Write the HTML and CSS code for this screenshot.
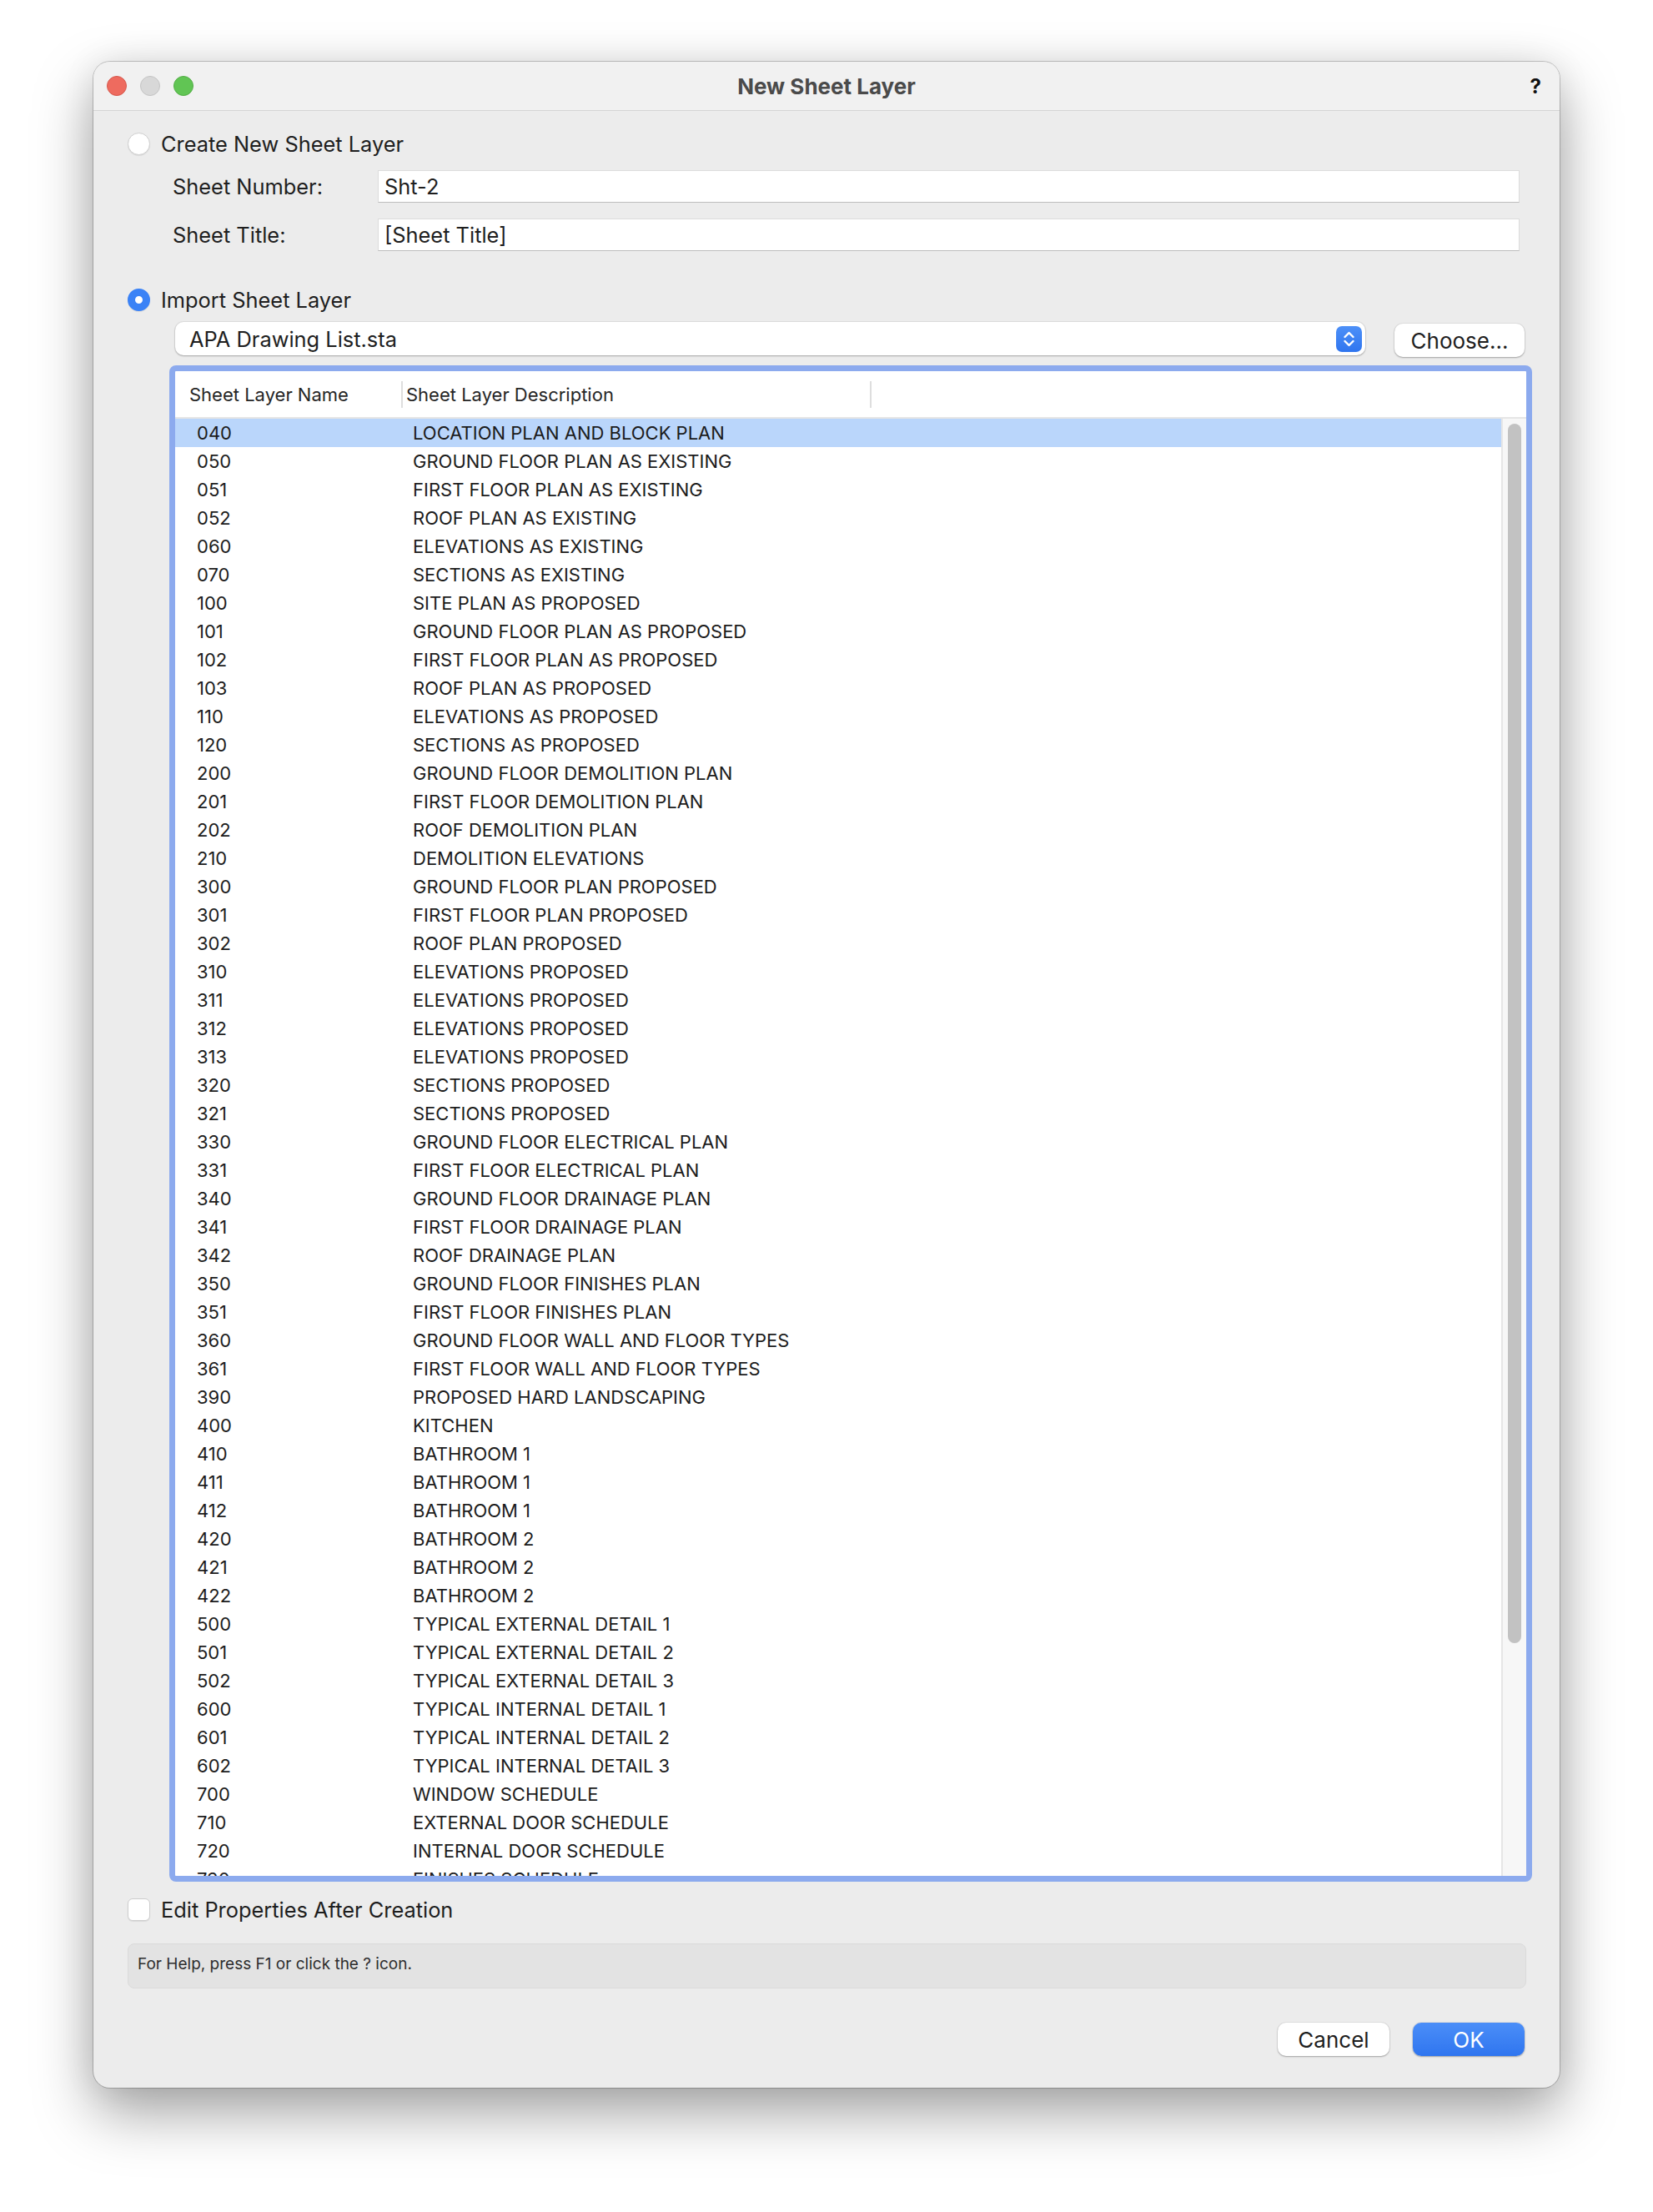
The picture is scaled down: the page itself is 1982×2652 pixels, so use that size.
FILE: index.html
```html
<!DOCTYPE html>
<html lang="en">
<head>
    <meta charset="UTF-8">
    <title>New Sheet Layer</title>
    <link rel="stylesheet" href="styles.css">
</head>
<body>
    <div class="window">
        <div class="titlebar">
            <div class="lights">
                <span class="light red"></span>
                <span class="light gray"></span>
                <span class="light green"></span>
            </div>
            <div class="title">New Sheet Layer</div>
            <div class="help-btn">?</div>
        </div>

        <div class="content">
            <div class="option first">
                <span class="radio"></span>
                <span>Create New Sheet Layer</span>
            </div>

            <div class="form">
                <label>Sheet Number:</label>
                <div class="field">Sht-2</div>
                <label>Sheet Title:</label>
                <div class="field">[Sheet Title]</div>
            </div>

            <div class="option second">
                <span class="radio checked"></span>
                <span>Import Sheet Layer</span>
            </div>

            <div class="file-row">
                <div class="popup">
                    <span>APA Drawing List.sta</span>
                    <svg class="stepper" width="31" height="31" viewBox="0 0 31 31">
                        <defs>
                            <linearGradient id="stepgrad" x1="0" y1="0" x2="0" y2="1">
                                <stop offset="0" stop-color="#4d90f8"/>
                                <stop offset="1" stop-color="#2f75ef"/>
                            </linearGradient>
                        </defs>
                        <rect width="31" height="31" rx="7" fill="url(#stepgrad)"/>
                        <path d="M10.5 13 L15.5 8 L20.5 13" fill="none" stroke="#fff" stroke-width="2.4" stroke-linecap="round" stroke-linejoin="round"/>
                        <path d="M10.5 18 L15.5 23 L20.5 18" fill="none" stroke="#fff" stroke-width="2.4" stroke-linecap="round" stroke-linejoin="round"/>
                    </svg>
                </div>
                <button class="btn choose">Choose...</button>
            </div>

            <div class="table">
                <div class="table-head">
                    <div class="col-name">Sheet Layer Name</div>
                    <span class="col-sep"></span>
                    <div class="col-desc">Sheet Layer Description</div>
                    <span class="col-sep"></span>
                </div>
                <div class="table-body">
                    <div class="rows">
                        <div class="row selected"><span>040</span><span>LOCATION PLAN AND BLOCK PLAN</span></div>
                        <div class="row"><span>050</span><span>GROUND FLOOR PLAN AS EXISTING</span></div>
                        <div class="row"><span>051</span><span>FIRST FLOOR PLAN AS EXISTING</span></div>
                        <div class="row"><span>052</span><span>ROOF PLAN AS EXISTING</span></div>
                        <div class="row"><span>060</span><span>ELEVATIONS AS EXISTING</span></div>
                        <div class="row"><span>070</span><span>SECTIONS AS EXISTING</span></div>
                        <div class="row"><span>100</span><span>SITE PLAN AS PROPOSED</span></div>
                        <div class="row"><span>101</span><span>GROUND FLOOR PLAN AS PROPOSED</span></div>
                        <div class="row"><span>102</span><span>FIRST FLOOR PLAN AS PROPOSED</span></div>
                        <div class="row"><span>103</span><span>ROOF PLAN AS PROPOSED</span></div>
                        <div class="row"><span>110</span><span>ELEVATIONS AS PROPOSED</span></div>
                        <div class="row"><span>120</span><span>SECTIONS AS PROPOSED</span></div>
                        <div class="row"><span>200</span><span>GROUND FLOOR DEMOLITION PLAN</span></div>
                        <div class="row"><span>201</span><span>FIRST FLOOR DEMOLITION PLAN</span></div>
                        <div class="row"><span>202</span><span>ROOF DEMOLITION PLAN</span></div>
                        <div class="row"><span>210</span><span>DEMOLITION ELEVATIONS</span></div>
                        <div class="row"><span>300</span><span>GROUND FLOOR PLAN PROPOSED</span></div>
                        <div class="row"><span>301</span><span>FIRST FLOOR PLAN PROPOSED</span></div>
                        <div class="row"><span>302</span><span>ROOF PLAN PROPOSED</span></div>
                        <div class="row"><span>310</span><span>ELEVATIONS PROPOSED</span></div>
                        <div class="row"><span>311</span><span>ELEVATIONS PROPOSED</span></div>
                        <div class="row"><span>312</span><span>ELEVATIONS PROPOSED</span></div>
                        <div class="row"><span>313</span><span>ELEVATIONS PROPOSED</span></div>
                        <div class="row"><span>320</span><span>SECTIONS PROPOSED</span></div>
                        <div class="row"><span>321</span><span>SECTIONS PROPOSED</span></div>
                        <div class="row"><span>330</span><span>GROUND FLOOR ELECTRICAL PLAN</span></div>
                        <div class="row"><span>331</span><span>FIRST FLOOR ELECTRICAL PLAN</span></div>
                        <div class="row"><span>340</span><span>GROUND FLOOR DRAINAGE PLAN</span></div>
                        <div class="row"><span>341</span><span>FIRST FLOOR DRAINAGE PLAN</span></div>
                        <div class="row"><span>342</span><span>ROOF DRAINAGE PLAN</span></div>
                        <div class="row"><span>350</span><span>GROUND FLOOR FINISHES PLAN</span></div>
                        <div class="row"><span>351</span><span>FIRST FLOOR FINISHES PLAN</span></div>
                        <div class="row"><span>360</span><span>GROUND FLOOR WALL AND FLOOR TYPES</span></div>
                        <div class="row"><span>361</span><span>FIRST FLOOR WALL AND FLOOR TYPES</span></div>
                        <div class="row"><span>390</span><span>PROPOSED HARD LANDSCAPING</span></div>
                        <div class="row"><span>400</span><span>KITCHEN</span></div>
                        <div class="row"><span>410</span><span>BATHROOM 1</span></div>
                        <div class="row"><span>411</span><span>BATHROOM 1</span></div>
                        <div class="row"><span>412</span><span>BATHROOM 1</span></div>
                        <div class="row"><span>420</span><span>BATHROOM 2</span></div>
                        <div class="row"><span>421</span><span>BATHROOM 2</span></div>
                        <div class="row"><span>422</span><span>BATHROOM 2</span></div>
                        <div class="row"><span>500</span><span>TYPICAL EXTERNAL DETAIL 1</span></div>
                        <div class="row"><span>501</span><span>TYPICAL EXTERNAL DETAIL 2</span></div>
                        <div class="row"><span>502</span><span>TYPICAL EXTERNAL DETAIL 3</span></div>
                        <div class="row"><span>600</span><span>TYPICAL INTERNAL DETAIL 1</span></div>
                        <div class="row"><span>601</span><span>TYPICAL INTERNAL DETAIL 2</span></div>
                        <div class="row"><span>602</span><span>TYPICAL INTERNAL DETAIL 3</span></div>
                        <div class="row"><span>700</span><span>WINDOW SCHEDULE</span></div>
                        <div class="row"><span>710</span><span>EXTERNAL DOOR SCHEDULE</span></div>
                        <div class="row"><span>720</span><span>INTERNAL DOOR SCHEDULE</span></div>
                        <div class="row"><span>730</span><span>FINISHES SCHEDULE</span></div>
                    </div>
                    <div class="scroll-track">
                        <div class="scroll-thumb"></div>
                    </div>
                </div>
            </div>

            <div class="option check-row">
                <span class="checkbox"></span>
                <span>Edit Properties After Creation</span>
            </div>

            <div class="help-box">For Help, press F1 or click the ? icon.</div>

            <div class="buttons">
                <button class="btn">Cancel</button>
                <button class="btn primary">OK</button>
            </div>
        </div>
    </div>
</body>
</html>
```

FILE: styles.css
```css
* {
    box-sizing: border-box;
}

body {
    margin: 0;
    width: 1982px;
    height: 2652px;
    overflow: hidden;
    padding: 74px 0 0 112px;
    background: #ffffff;
    font-family: Inter, 'Noto Sans', sans-serif;
    color: #1e1e1e;
}

.window {
    width: 1758px;
    background: #ececec;
    border-radius: 20px;
    overflow: hidden;
    box-shadow: 0 0 0 1px rgba(0,0,0,0.2), 0 30px 70px rgba(0,0,0,0.36), 0 0 40px rgba(0,0,0,0.08);
}

/* title bar */
.titlebar {
    height: 59px;
    background: #f1f1f1;
    border-bottom: 1px solid #d5d5d5;
    display: grid;
    grid-template-columns: 1fr auto 1fr;
    align-items: center;
}

.lights {
    display: flex;
    gap: 16px;
    padding-left: 16px;
}

.light {
    width: 24px;
    height: 24px;
    border-radius: 50%;
    border: 1px solid;
}

.light.red {
    background: #ee6b5f;
    border-color: #d5584d;
}

.light.gray {
    background: #d8d8d8;
    border-color: #c4c4c4;
}

.light.green {
    background: #61c554;
    border-color: #53ad46;
}

.title {
    font-size: 26px;
    font-weight: 700;
    color: #4a4a4a;
}

.help-btn {
    justify-self: end;
    padding-right: 22px;
    font-size: 24px;
    font-weight: 700;
    color: #111;
}

/* body */
.content {
    padding: 0 42px 38px 41px;
    font-size: 25.4px;
}

.option {
    display: flex;
    align-items: center;
    gap: 13px;
    height: 30px;
}

.option.first {
    margin-top: 24px;
}

.option.second {
    margin-top: 43px;
}

.radio {
    width: 27px;
    height: 27px;
    border-radius: 50%;
    background: #fff;
    border: 1px solid #cdcdcd;
    box-shadow: 0 1px 1px rgba(0,0,0,0.08);
}

.radio.checked {
    border: 9px solid #3a82f6;
    background: #fff;
}

.form {
    display: grid;
    grid-template-columns: 246px 1fr;
    row-gap: 19px;
    align-items: center;
    margin: 17px 6px 0 0;
    padding-left: 54px;
}

.field {
    height: 39px;
    background: #fff;
    border: 1px solid #dcdcdc;
    border-bottom-color: #bdbdbd;
    padding-left: 7px;
    display: flex;
    align-items: center;
}

.file-row {
    display: flex;
    align-items: flex-start;
    margin-top: 12px;
}

.popup {
    flex: 1;
    height: 40px;
    margin-left: 57px;
    background: #fff;
    border-radius: 10px;
    box-shadow: 0 0 0 1px rgba(0,0,0,0.06), 0 1px 2px rgba(0,0,0,0.25);
    display: flex;
    align-items: center;
    justify-content: space-between;
    padding: 0 4px 0 17px;
}

.btn {
    width: 134px;
    height: 40px;
    border: none;
    border-radius: 10px;
    background: #fff;
    box-shadow: 0 0 0 1px rgba(0,0,0,0.05), 0 1px 2px rgba(0,0,0,0.28);
    font-family: inherit;
    font-size: 26px;
    color: #1e1e1e;
    padding: 0;
}

.btn.choose {
    width: 156px;
    margin: 2px 0 0 35px;
}

.btn.primary {
    background: linear-gradient(#4b8ef8, #2f75ef);
    color: #fff;
}

/* list */
.table {
    width: 1634px;
    height: 1818px;
    margin: 10px 0 0 50px;
    border: 7px solid #8caaee;
    border-radius: 8px;
    background: #fff;
    display: flex;
    flex-direction: column;
    overflow: hidden;
}

.table-head {
    height: 57px;
    flex-shrink: 0;
    display: flex;
    align-items: center;
    border-bottom: 2px solid #e5e5e5;
    font-size: 22px;
    color: #262626;
}

.col-name {
    width: 271px;
    padding-left: 17px;
}

.col-sep {
    width: 2px;
    height: 32px;
    background: #dedede;
}

.col-desc {
    width: 560px;
    padding-left: 4px;
}

.table-body {
    flex: 1;
    display: flex;
    overflow: hidden;
}

.rows {
    flex: 1;
    overflow: hidden;
}

.row {
    height: 34px;
    display: grid;
    grid-template-columns: 259px 1fr;
    align-items: center;
    padding-left: 26px;
    font-size: 22px;
    color: #1c1c1c;
}

.row.selected {
    background: #bad6fb;
}

.scroll-track {
    width: 30px;
    flex-shrink: 0;
    background: #f7f7f7;
    border-left: 2px solid #e6e6e6;
}

.scroll-thumb {
    width: 16px;
    height: 1462px;
    margin: 6px auto 0;
    border-radius: 8px;
    background: #c2c2c2;
}

/* bottom */
.check-row {
    margin-top: 19px;
    height: 28px;
}

.checkbox {
    width: 27px;
    height: 27px;
    border-radius: 6px;
    background: #fff;
    border: 1px solid #cdcdcd;
    box-shadow: 0 1px 1px rgba(0,0,0,0.08);
}

.help-box {
    width: 1677px;
    height: 54px;
    margin-top: 27px;
    padding: 0 0 6px 11px;
    display: flex;
    align-items: center;
    background: #e3e3e3;
    border: 1px solid #dadada;
    border-radius: 8px;
    font-size: 19px;
    color: #2e2e2e;
}

.buttons {
    display: flex;
    justify-content: flex-end;
    gap: 28px;
    margin-top: 41px;
}
```
